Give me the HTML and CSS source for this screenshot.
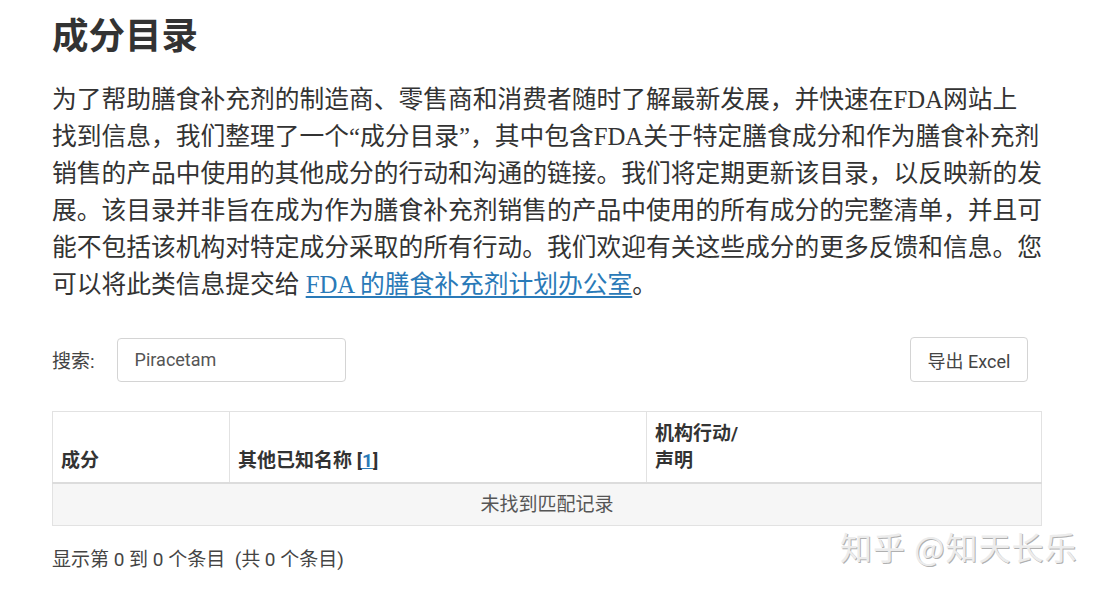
FILE: index.html
```html
<!DOCTYPE html>
<html lang="zh-CN">
<head>
<meta charset="utf-8">
<title>成分目录</title>
<link rel="stylesheet" href="styles.css">
</head>
<body>
<main class="page">
  <h1 class="title">成分目录</h1>
  <p class="intro">为了帮助膳食补充剂的制造商、零售商和消费者随时了解最新发展，并快速在FDA网站上<br>找到信息，我们整理了一个“成分目录”，其中包含FDA关于特定膳食成分和作为膳食补充剂<br>销售的产品中使用的其他成分的行动和沟通的链接。我们将定期更新该目录，以反映新的发<br>展。该目录并非旨在成为作为膳食补充剂销售的产品中使用的所有成分的完整清单，并且可<br>能不包括该机构对特定成分采取的所有行动。我们欢迎有关这些成分的更多反馈和信息。您<br>可以将此类信息提交给 <a href="#" class="link">FDA 的膳食补充剂计划办公室</a>。</p>

  <div class="toolbar">
    <label class="search">搜索:<span class="input">Piracetam</span></label>
    <button class="btn">导出 Excel</button>
  </div>

  <table class="grid">
    <thead>
      <tr>
        <th class="c1">成分</th>
        <th class="c2">其他已知名称 [<a href="#" class="ref">1</a>]</th>
        <th class="c3">机构行动/<br>声明</th>
      </tr>
    </thead>
    <tbody>
      <tr><td colspan="3" class="empty">未找到匹配记录</td></tr>
    </tbody>
  </table>

  <div class="info">显示第 0 到 0 个条目&nbsp;&nbsp;(共 0 个条目)</div>
</main>
<div class="watermark">知乎 @知天长乐</div>
</body>
</html>
```

FILE: styles.css
```css
html, body {
  margin: 0;
  padding: 0;
  background: #fff;
}
body {
  font-family: Roboto, "Noto Sans CJK SC", sans-serif;
  color: #333;
  position: relative;
  width: 1106px;
  height: 594px;
  overflow: hidden;
}
.page {
  padding: 0 0 0 52px;
  width: 990px;
}
.title {
  margin: 12px 0 0;
  font-family: "Noto Sans CJK SC", sans-serif;
  font-size: 36.5px;
  line-height: 44px;
  font-weight: 700;
  color: #333;
}
.intro {
  margin: 25px 0 0;
  font-family: "Liberation Serif", "Noto Sans CJK SC", serif;
  font-size: 24.75px;
  line-height: 37px;
  color: #333;
  width: 1010px;
  white-space: nowrap;
}
.link {
  color: #2a7ab8;
  text-decoration: underline;
  text-underline-offset: 3px;
}
.toolbar {
  margin-top: 34px;
  display: flex;
  justify-content: space-between;
  align-items: center;
  width: 976px;
}
.search {
  display: flex;
  align-items: center;
  font-size: 19px;
  color: #444;
  gap: 22px;
}
.input {
  display: flex;
  align-items: center;
  box-sizing: border-box;
  width: 229px;
  height: 44px;
  padding: 0 17px;
  border: 1px solid #d4d4d4;
  border-radius: 4px;
  font-size: 18px;
  color: #555;
}
.btn {
  box-sizing: border-box;
  height: 45px;
  width: 118px;
  background: #fff;
  border: 1px solid #d4d4d4;
  border-radius: 4px;
  font-family: Roboto, "Noto Sans CJK SC", sans-serif;
  font-size: 18px;
  color: #444;
}
.grid {
  margin-top: 29px;
  width: 990px;
  border-collapse: collapse;
  border: 1px solid #e2e2e2;
  font-size: 19px;
}
.grid th {
  text-align: left;
  vertical-align: bottom;
  font-weight: 700;
  padding: 8px 8px;
  line-height: 27px;
  color: #333;
  border-left: 1px solid #e2e2e2;
  border-bottom: 2px solid #dcdcdc;
  height: 54px;
}
.grid th.c1 { width: 160px; border-left: none; }
.grid th.c2 { width: 400px; }
.ref { color: #2a7ab8; }
.empty {
  background: #f6f6f6;
  text-align: center;
  padding: 8px;
  line-height: 25px;
  color: #555;
}
.info {
  margin-top: 22px;
  font-size: 19px;
  line-height: 24px;
  color: #444;
}
.watermark {
  position: absolute;
  left: 840px;
  top: 526px;
  font-family: "Noto Sans CJK SC", sans-serif;
  font-size: 32px;
  line-height: 40px;
  color: #ececec;
  text-shadow: 1px 1px 0 #b0b0b0;
  letter-spacing: 1px;
}
```
